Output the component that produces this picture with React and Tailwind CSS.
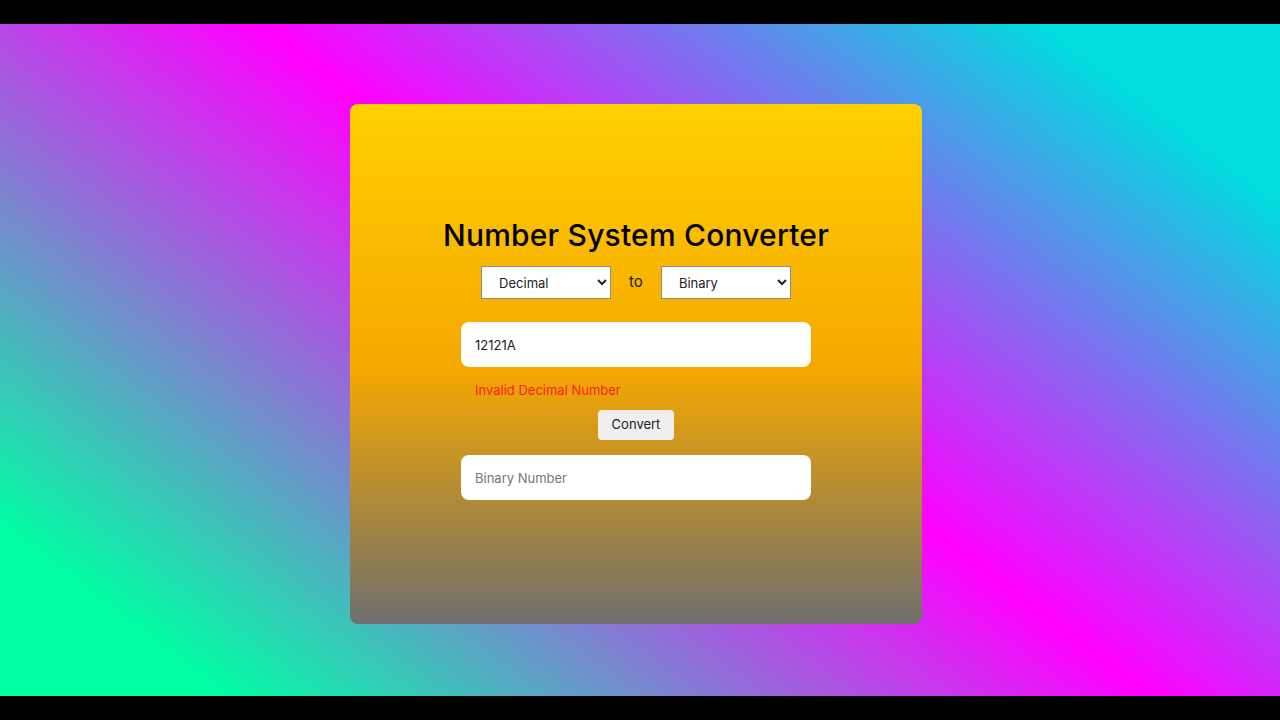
import { useState } from 'react'

const FONT = "font-['Inter','Noto_Sans',sans-serif]"

export default function App() {
  const [from, setFrom] = useState('decimal')
  const [to, setTo] = useState('binary')
  const [value, setValue] = useState('12121A')

  return (
    <div className={`w-[1280px] h-[720px] bg-black flex flex-col ${FONT}`}>
      <div className="h-[24px] shrink-0" />
      <div className="h-[672px] shrink-0 flex items-center justify-center bg-[linear-gradient(37deg,#00ffa3_10%,#ff00ff_53%,#00dcdf_89%)]">
        <div className="mr-[8px] mt-[8px] w-[572px] h-[520px] rounded-lg bg-[linear-gradient(to_bottom,#ffd000_0%,#f5a700_51%,#6e6e6e_100%)] flex flex-col items-center justify-center pb-[10px]">
          <h1 className="text-[30px] leading-[34px] font-medium text-black tracking-[0.2px]">
            Number System Converter
          </h1>

          <div className="mt-[14px] flex items-center gap-[18px]">
            <select
              value={from}
              onChange={(e) => setFrom(e.target.value)}
              className="w-[130px] h-[33px] bg-white border border-[#8a8a8a] pl-[13px] pr-[6px] text-[13px] text-[#222]"
            >
              <option value="decimal">Decimal</option>
              <option value="binary">Binary</option>
              <option value="octal">Octal</option>
              <option value="hexadecimal">Hexadecimal</option>
            </select>
            <span className="text-[15px] text-[#222]">to</span>
            <select
              value={to}
              onChange={(e) => setTo(e.target.value)}
              className="w-[130px] h-[33px] bg-white border border-[#8a8a8a] pl-[13px] pr-[6px] text-[13px] text-[#222]"
            >
              <option value="binary">Binary</option>
              <option value="decimal">Decimal</option>
              <option value="octal">Octal</option>
              <option value="hexadecimal">Hexadecimal</option>
            </select>
          </div>

          <div className="mt-[23px] w-[350px] flex flex-col">
            <input
              value={value}
              onChange={(e) => setValue(e.target.value)}
              className="h-[45px] w-full rounded-lg bg-white px-[14px] text-[13px] text-[#222] outline-none"
            />
            <p className="mt-[16px] pl-[14px] text-[13px] leading-[14px] text-[#ff1e1e]">
              Invalid Decimal Number
            </p>
          </div>

          <button className="mt-[13px] w-[76px] h-[30px] rounded bg-[#efefef] text-[13px] text-[#222]">
            Convert
          </button>

          <input
            readOnly
            placeholder="Binary Number"
            className="mt-[15px] h-[45px] w-[350px] rounded-lg bg-white px-[14px] text-[13px] text-[#222] placeholder:text-[#777] outline-none"
          />
        </div>
      </div>
      <div className="h-[24px] shrink-0" />
    </div>
  )
}
